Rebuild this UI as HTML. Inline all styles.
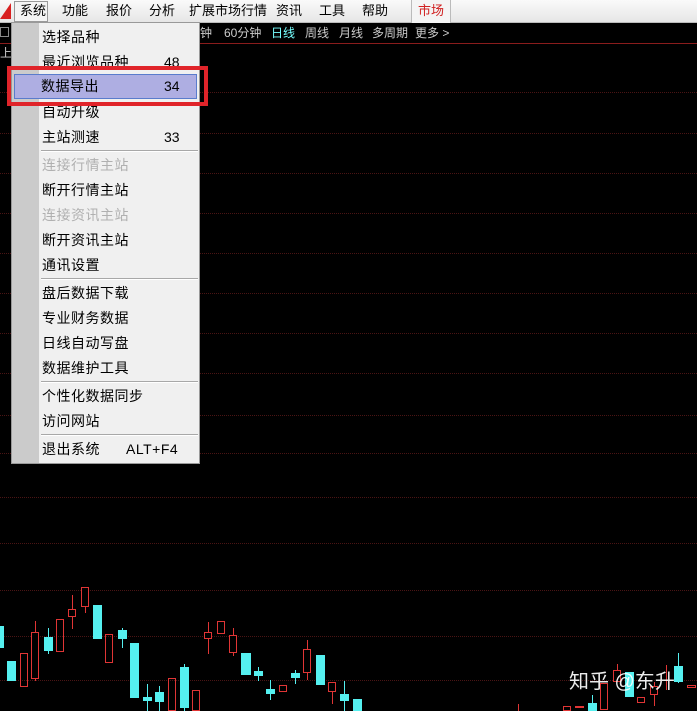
<!DOCTYPE html>
<html><head><meta charset="utf-8"><style>
*{margin:0;padding:0;box-sizing:border-box}
body{width:697px;height:711px;background:#000;position:relative;overflow:hidden;font-family:"Liberation Sans","Noto Sans CJK SC",sans-serif;font-size:13px}
.a{position:absolute}
#bar{left:0;top:0;width:697px;height:23px;background:linear-gradient(#fafafa,#e6e6e6);border-bottom:1px solid #bbb}
#bar span{position:absolute;top:3px;color:#000;font-size:13px;line-height:16px}
.g{left:0;width:697px;height:1px;border-top:1px dotted #4a1414}
#tb span{position:absolute;top:25px;color:#ccc;font-size:12px;line-height:16px}
.c{position:absolute;background:#55f0f0}
.r{position:absolute;border:1px solid #e03535}
.w{position:absolute;width:1px}
#menu{left:11px;top:22px;width:189px;height:442px;background:#f0f0f0;border:1px solid #999}
#strip{left:0;top:0;width:27px;height:440px;background:#cbcbcb}
.mi{position:absolute;left:30px;font-size:14px;line-height:18px;color:#000;letter-spacing:0.5px}
.dis{color:#b0b0b0}
.num{position:absolute;font-size:14px;line-height:18px;color:#000}
.sep{position:absolute;left:29px;width:157px;height:2px;border-top:1px solid #a8a8a8;border-bottom:1px solid #fff}
</style></head><body>
<div id="bar" class="a">
<div class="a" style="left:0;top:3px;width:11px;height:16px;background:#d82020;clip-path:polygon(0 100%,100% 0,100% 100%)"></div>
<div class="a" style="left:14px;top:1px;width:34px;height:21px;border:1px solid #9a9a9a;background:#f4f4f4"></div>
<span style="left:20px">系统</span><span style="left:62px">功能</span><span style="left:106px">报价</span><span style="left:149px">分析</span><span style="left:189px">扩展市场行情</span><span style="left:276px">资讯</span><span style="left:319px">工具</span><span style="left:362px">帮助</span>
<div class="a" style="left:411px;top:0;width:40px;height:23px;border-left:1px solid #bbb;border-right:1px solid #bbb;background:#f4f4f4"></div>
<span style="left:418px;color:#d02020">市场</span>
</div>
<div id="tb">
<div class="a" style="left:0;top:27px;width:9px;height:10px;border:1px solid #888"></div>
<span style="left:200px">钟</span><span style="left:224px">60分钟</span><span style="left:271px;color:#7ff">日线</span><span style="left:305px">周线</span><span style="left:339px">月线</span><span style="left:372px">多周期</span><span style="left:415px">更多 ></span>
<span style="left:0;top:45px;color:#ccc">上</span>
</div>
<div class="a" style="left:0;top:43px;width:697px;height:1px;background:#8a1c1c"></div>
<div class="a g" style="top:92px"></div><div class="a g" style="top:133px"></div><div class="a g" style="top:173px"></div><div class="a g" style="top:213px"></div><div class="a g" style="top:253px"></div><div class="a g" style="top:293px"></div><div class="a g" style="top:333px"></div><div class="a g" style="top:373px"></div><div class="a g" style="top:415px"></div><div class="a g" style="top:453px"></div><div class="a g" style="top:497px"></div><div class="a g" style="top:543px"></div><div class="a g" style="top:590px"></div><div class="a g" style="top:636px"></div><div class="a g" style="top:680px"></div>

<div class="c" style="left:0;top:626px;width:4px;height:22px"></div>
<div class="c" style="left:7px;top:661px;width:9px;height:20px"></div>
<div class="r" style="left:20px;top:653px;width:8px;height:34px"></div>
<div class="w" style="left:35px;top:621px;height:60px;background:#e03535"></div>
<div class="r" style="left:31px;top:632px;width:8px;height:47px;background:#000"></div>
<div class="w" style="left:48px;top:628px;height:26px;background:#55f0f0"></div>
<div class="c" style="left:44px;top:637px;width:9px;height:14px"></div>
<div class="r" style="left:56px;top:619px;width:8px;height:33px"></div>
<div class="w" style="left:72px;top:595px;height:34px;background:#e03535"></div>
<div class="r" style="left:68px;top:609px;width:8px;height:8px;background:#000"></div>
<div class="w" style="left:85px;top:587px;height:26px;background:#e03535"></div>
<div class="r" style="left:81px;top:587px;width:8px;height:20px;background:#000"></div>
<div class="c" style="left:93px;top:605px;width:9px;height:34px"></div>
<div class="r" style="left:105px;top:634px;width:8px;height:29px"></div>
<div class="w" style="left:122px;top:628px;height:20px;background:#55f0f0"></div>
<div class="c" style="left:118px;top:630px;width:9px;height:9px"></div>
<div class="c" style="left:130px;top:643px;width:9px;height:55px"></div>
<div class="w" style="left:147px;top:684px;height:27px;background:#55f0f0"></div>
<div class="c" style="left:143px;top:697px;width:9px;height:4px"></div>
<div class="w" style="left:159px;top:686px;height:25px;background:#55f0f0"></div>
<div class="c" style="left:155px;top:692px;width:9px;height:10px"></div>
<div class="r" style="left:168px;top:678px;width:8px;height:33px"></div>
<div class="w" style="left:184px;top:664px;height:47px;background:#55f0f0"></div>
<div class="c" style="left:180px;top:667px;width:9px;height:41px"></div>
<div class="r" style="left:192px;top:690px;width:8px;height:21px"></div>
<div class="w" style="left:208px;top:622px;height:32px;background:#e03535"></div>
<div class="r" style="left:204px;top:632px;width:8px;height:7px;background:#000"></div>
<div class="r" style="left:217px;top:621px;width:8px;height:13px"></div>
<div class="w" style="left:233px;top:628px;height:28px;background:#e03535"></div>
<div class="r" style="left:229px;top:635px;width:8px;height:18px;background:#000"></div>
<div class="c" style="left:241px;top:653px;width:10px;height:22px"></div>
<div class="w" style="left:258px;top:667px;height:14px;background:#55f0f0"></div>
<div class="c" style="left:254px;top:671px;width:9px;height:5px"></div>
<div class="w" style="left:270px;top:680px;height:20px;background:#55f0f0"></div>
<div class="c" style="left:266px;top:689px;width:9px;height:5px"></div>
<div class="r" style="left:279px;top:685px;width:8px;height:7px"></div>
<div class="w" style="left:295px;top:670px;height:14px;background:#55f0f0"></div>
<div class="c" style="left:291px;top:673px;width:9px;height:5px"></div>
<div class="w" style="left:307px;top:640px;height:40px;background:#e03535"></div>
<div class="r" style="left:303px;top:649px;width:8px;height:24px;background:#000"></div>
<div class="c" style="left:316px;top:655px;width:9px;height:30px"></div>
<div class="w" style="left:332px;top:682px;height:22px;background:#e03535"></div>
<div class="r" style="left:328px;top:682px;width:8px;height:10px;background:#000"></div>
<div class="w" style="left:344px;top:681px;height:30px;background:#55f0f0"></div>
<div class="c" style="left:340px;top:694px;width:9px;height:7px"></div>
<div class="c" style="left:353px;top:699px;width:9px;height:12px"></div>
<div class="w" style="left:518px;top:704px;height:7px;background:#e03535"></div>
<div class="r" style="left:563px;top:706px;width:8px;height:5px"></div>
<div class="a" style="left:575px;top:706px;width:9px;height:2px;background:#e03535"></div>
<div class="w" style="left:592px;top:695px;height:16px;background:#55f0f0"></div>
<div class="c" style="left:588px;top:703px;width:9px;height:8px"></div>
<div class="r" style="left:600px;top:683px;width:8px;height:27px"></div>
<div class="w" style="left:617px;top:664px;height:18px;background:#e03535"></div>
<div class="r" style="left:613px;top:670px;width:8px;height:12px;background:#000"></div>
<div class="c" style="left:625px;top:672px;width:9px;height:25px"></div>
<div class="r" style="left:637px;top:697px;width:8px;height:6px"></div>
<div class="w" style="left:654px;top:682px;height:24px;background:#e03535"></div>
<div class="r" style="left:650px;top:686px;width:8px;height:9px;background:#000"></div>
<div class="w" style="left:666px;top:665px;height:25px;background:#e03535"></div>
<div class="w" style="left:678px;top:653px;height:30px;background:#55f0f0"></div>
<div class="c" style="left:674px;top:666px;width:9px;height:16px"></div>
<div class="r" style="left:687px;top:685px;width:9px;height:3px"></div>
<div class="a" style="left:569px;top:670px;color:#fff;font-size:20px;line-height:24px;opacity:.92">知乎 @东升</div>

<div id="menu" class="a">
<div id="strip" class="a"></div>
<div class="mi" style="top:5px">选择品种</div>
<div class="mi" style="top:30px">最近浏览品种</div><div class="num" style="left:152px;top:30px">48</div>
<div class="mi" style="top:80px">自动升级</div>
<div class="mi" style="top:105px">主站测速</div><div class="num" style="left:152px;top:105px">33</div>
<div class="sep" style="top:127px"></div>
<div class="mi dis" style="top:133px">连接行情主站</div>
<div class="mi" style="top:158px">断开行情主站</div>
<div class="mi dis" style="top:183px">连接资讯主站</div>
<div class="mi" style="top:208px">断开资讯主站</div>
<div class="mi" style="top:233px">通讯设置</div>
<div class="sep" style="top:255px"></div>
<div class="mi" style="top:261px">盘后数据下载</div>
<div class="mi" style="top:286px">专业财务数据</div>
<div class="mi" style="top:311px">日线自动写盘</div>
<div class="mi" style="top:336px">数据维护工具</div>
<div class="sep" style="top:358px"></div>
<div class="mi" style="top:364px">个性化数据同步</div>
<div class="mi" style="top:389px">访问网站</div>
<div class="sep" style="top:411px"></div>
<div class="mi" style="top:417px">退出系统</div><div class="num" style="left:114px;top:417px;letter-spacing:0.5px">ALT+F4</div>
</div>
<div class="a" style="left:7px;top:66px;width:201px;height:40px;border:4px solid #e0242a"></div>
<div class="a" style="left:14px;top:74px;width:183px;height:25px;background:#aeaee2;border:1px solid #5a7ccc"></div>
<div class="a" style="left:41px;top:77px;font-size:14px;line-height:18px;letter-spacing:0.5px">数据导出</div>
<div class="a" style="left:164px;top:77px;font-size:14px;line-height:18px">34</div>
</body></html>
